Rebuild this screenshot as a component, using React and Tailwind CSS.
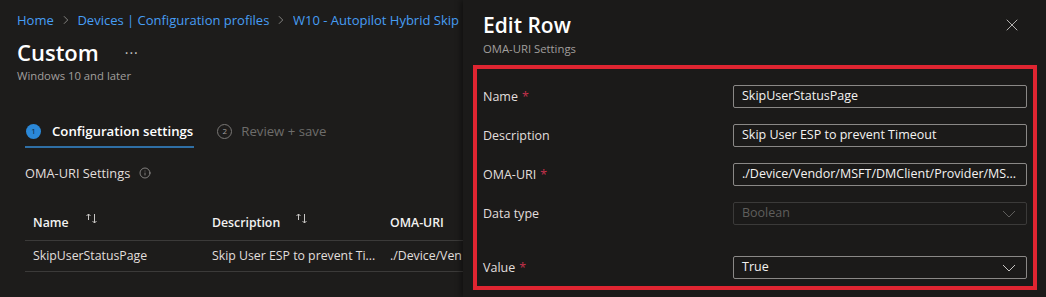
import { X, Info } from 'lucide-react'

const font = { fontFamily: "'Open Sans', 'Noto Sans', sans-serif" }

function Chevron({ className = '' }) {
  return (
    <svg width="14" height="8" viewBox="0 0 14 8" fill="none" className={className}>
      <path d="M1 1L7 7L13 1" stroke="currentColor" strokeWidth="1" />
    </svg>
  )
}

function Crumb() {
  return (
    <svg width="6" height="10" viewBox="0 0 6 10" fill="none" className="text-[#8a8886]">
      <path d="M1 1L5 5L1 9" stroke="currentColor" strokeWidth="1" />
    </svg>
  )
}

function SortIcon() {
  return (
    <svg width="13" height="11" viewBox="0 0 13 11" fill="none" className="text-[#c8c6c4] -mt-[8px]">
      <path d="M3.5 7V1M1.5 3L3.5 1L5.5 3" stroke="currentColor" strokeWidth="1" />
      <path d="M9.5 1V10M7.5 8L9.5 10L11.5 8" stroke="currentColor" strokeWidth="1" />
    </svg>
  )
}

function Field({ label, required, children }) {
  return (
    <div className="flex items-center justify-between">
      <span className="text-[12.5px] leading-5 text-[#e1dfdd]">
        {label}
        {required && <span className="ml-[4px] text-[#c4314b]">*</span>}
      </span>
      {children}
    </div>
  )
}

function TextBox({ value }) {
  return (
    <div className="w-[294px] h-[23px] border border-[#8a8886] rounded-[2px] pl-[8px] pr-[10px] flex items-center text-[12.5px] text-[#f3f2f1] whitespace-nowrap overflow-hidden">
      <span>{value}</span>
    </div>
  )
}

function Select({ value, disabled }) {
  return (
    <div className={`w-[294px] h-[23px] border rounded-[2px] pl-[8px] pr-[10px] flex items-center justify-between text-[12.5px] ${disabled ? 'border-[#3b3a39] text-[#5f5e5c]' : 'border-[#8a8886] text-[#f3f2f1]'}`}>
      <span>{value}</span>
      <Chevron className={disabled ? 'text-[#5f5e5c]' : 'text-[#c8c6c4]'} />
    </div>
  )
}

export default function App() {
  return (
    <div className="w-[1046px] h-[297px] flex bg-[#1b1a19] text-white overflow-hidden" style={font}>
      {/* ── Page behind the blade ───────────────────── */}
      <div className="w-[463px] shrink-0 overflow-hidden bg-[#1d1c1b]">
        <div className="pt-[10px] pl-[17px] flex items-center gap-[9px] text-[13px] leading-5 text-[#479ef5] whitespace-nowrap">
          <span>Home</span>
          <Crumb />
          <span>Devices | Configuration profiles</span>
          <Crumb />
          <span className="w-[170px] shrink-0 overflow-hidden">W10 - Autopilot Hybrid Skip</span>
        </div>

        <div className="mt-[6px] pl-[17px] flex items-center">
          <h1 className="text-[22px] leading-8 font-semibold text-white">Custom</h1>
          <span className="ml-[26px] text-[14px] text-[#c8c6c4] tracking-[1px]">···</span>
        </div>
        <p className="pl-[17px] text-[11.3px] leading-4 text-[#a19f9d]">Windows 10 and later</p>

        {/* Tabs */}
        <div className="mt-[37px] pl-[25px] flex items-start">
          <div className="flex items-center gap-[11px] pl-[1px] pr-[1px] pb-[5px] border-b-2 border-[#2f6fa5]">
            <span className="w-[15px] h-[15px] rounded-full bg-[#2b88d8] text-[8px] leading-none text-[#0b2640] flex items-center justify-center">1</span>
            <span className="text-[13.2px] leading-5 font-semibold text-white">Configuration settings</span>
          </div>
          <div className="ml-[23px] flex items-center gap-[9px]">
            <span className="w-[15px] h-[15px] rounded-full border border-[#797775] text-[8px] leading-none text-[#a19f9d] flex items-center justify-center">2</span>
            <span className="text-[13.2px] leading-5 text-[#6e6d6b]">Review + save</span>
          </div>
        </div>

        <div className="mt-[15px] pl-[25px] flex items-center gap-[9px] text-[12.8px] leading-5 text-[#e1dfdd]">
          <span>OMA-URI Settings</span>
          <Info size={12} strokeWidth={1.5} className="text-[#a19f9d]" />
        </div>

        {/* Table */}
        <div className="mt-[22px] ml-[25px] text-[12.3px] leading-5 whitespace-nowrap">
          <div className="h-[36px] flex items-center border-b border-[#3b3a39] font-semibold text-[#f3f2f1]">
            <div className="w-[179px] shrink-0 pl-[8px] flex items-center gap-[16px]">Name <SortIcon /></div>
            <div className="w-[178px] shrink-0 pl-[8px] flex items-center gap-[15px]">Description <SortIcon /></div>
            <div className="shrink-0 pl-[8px]">OMA-URI</div>
          </div>
          <div className="h-[31px] flex items-center border-b border-[#3b3a39] text-[#e1dfdd]">
            <div className="w-[179px] shrink-0 pl-[8px]">SkipUserStatusPage</div>
            <div className="w-[178px] shrink-0 pl-[8px]">Skip User ESP to prevent Ti...</div>
            <div className="w-[81px] shrink-0 pl-[8px] overflow-hidden">./Device/Ven</div>
          </div>
        </div>
      </div>

      {/* ── Edit Row blade ───────────────────────────── */}
      <div className="flex-1 bg-[#1b1a19] shadow-[-2px_0_6px_rgba(0,0,0,0.45)]">
        <div className="flex items-start justify-between pl-[20px] pr-[24px]">
          <div>
            <h2 className="pt-[10px] text-[21px] leading-[30px] font-semibold text-white">Edit Row</h2>
            <p className="pt-[1px] text-[11.3px] leading-4 text-[#a19f9d]">OMA-URI Settings</p>
          </div>
          <X size={20} strokeWidth={1} className="mt-[15px] text-[#d2d0ce]" />
        </div>

        <div className="mt-[8px] ml-[10px] mr-[9px] border-4 border-[#df2531] pt-[16px] pb-[7px] pl-[6px] pr-[6px] flex flex-col gap-[16px]">
          <Field label="Name" required>
            <TextBox value="SkipUserStatusPage" />
          </Field>
          <Field label="Description">
            <TextBox value="Skip User ESP to prevent Timeout" />
          </Field>
          <Field label="OMA-URI" required>
            <TextBox value="./Device/Vendor/MSFT/DMClient/Provider/MS..." />
          </Field>
          <Field label="Data type">
            <Select value="Boolean" disabled />
          </Field>
          <div className="mt-[15px]">
            <Field label="Value" required>
              <Select value="True" />
            </Field>
          </div>
        </div>
      </div>
    </div>
  )
}
